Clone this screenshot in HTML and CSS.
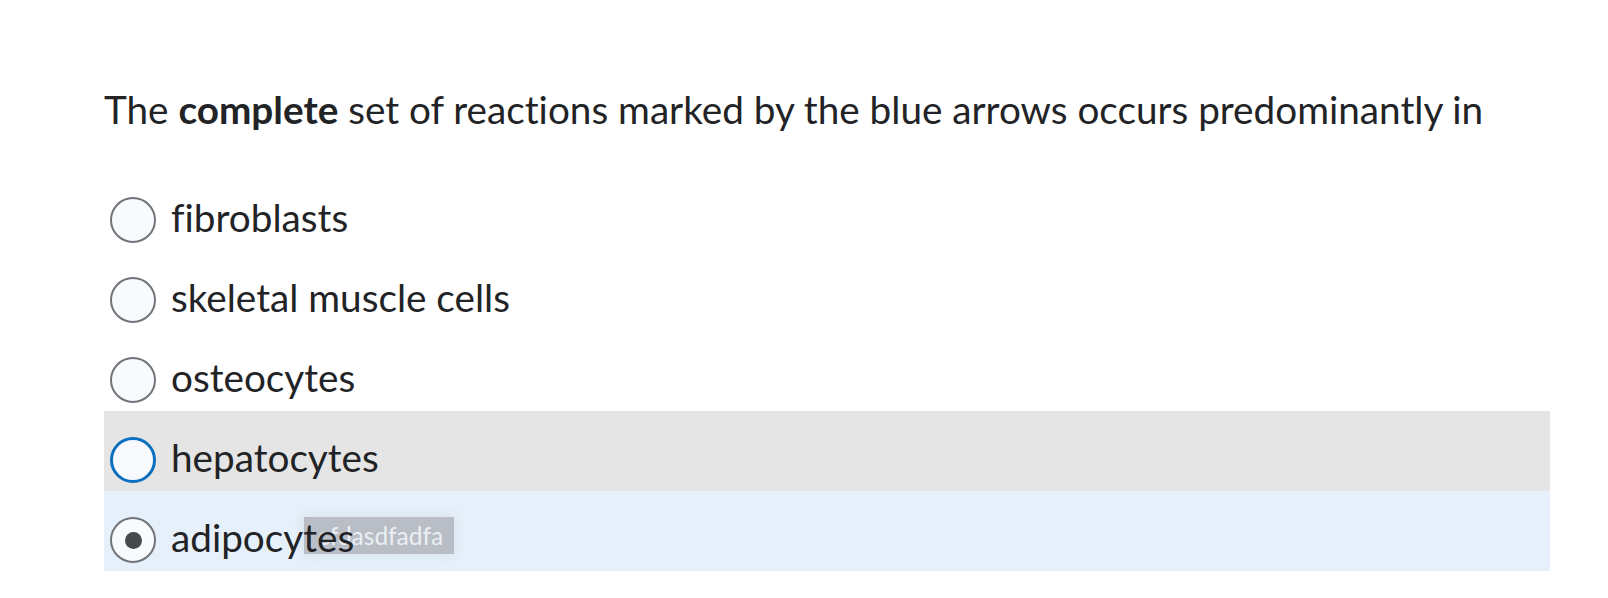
FILE: index.html
```html
<!DOCTYPE html>
<html>
<head>
<meta charset="utf-8">
<link rel="stylesheet" href="styles.css">
</head>
<body>
<div class="quiz">
  <p class="question">The <strong>complete</strong> set of reactions marked by the blue arrows occurs predominantly in</p>
  <div class="options">
    <div class="option">
      <span class="radio"></span>
      <span class="label">fibroblasts</span>
    </div>
    <div class="option">
      <span class="radio"></span>
      <span class="label">skeletal muscle cells</span>
    </div>
    <div class="option">
      <span class="radio"></span>
      <span class="label">osteocytes</span>
    </div>
    <div class="option option-hover">
      <span class="radio radio-focus"></span>
      <span class="label">hepatocytes</span>
    </div>
    <div class="option option-selected">
      <span class="radio radio-checked"></span>
      <span class="label">adipocytes<span class="drag-ghost">cfdasdfadfa</span></span>
    </div>
  </div>
</div>
</body>
</html>
```

FILE: styles.css
```css
* { box-sizing: border-box; }

body {
  margin: 0;
  background: #ffffff;
  font-family: Lato, "Open Sans", "Liberation Sans", sans-serif;
  color: #222326;
  font-variant-ligatures: none;
}

.quiz {
  margin-left: 104px;
  width: 1446px;
  padding-top: 88px;
}

.question {
  margin: 0;
  font-size: 38.7px;
  line-height: 43px;
  font-weight: 400;
}

.question strong {
  font-weight: 700;
}

.options {
  margin-top: 40px;
  display: flex;
  flex-direction: column;
}

.option {
  height: 80px;
  display: flex;
  align-items: flex-start;
  padding-left: 6px;
}

.option-hover {
  background: #e5e5e5;
}

.option-selected {
  background: #e6f0fa;
}

.radio {
  flex: none;
  width: 46px;
  height: 46px;
  margin-top: 26px;
  border-radius: 50%;
  border: 2px solid #6f7479;
  background: #f8fafe;
  display: flex;
  align-items: center;
  justify-content: center;
}

.radio-focus {
  border: 3px solid #0b6fbf;
}

.radio-checked::after {
  content: "";
  width: 17px;
  height: 17px;
  border-radius: 50%;
  background: #46484c;
}

.label {
  position: relative;
  margin-left: 15px;
  margin-top: 22px;
  font-size: 38.7px;
  line-height: 48px;
}

.option-selected .label {
  z-index: 0;
}

.drag-ghost {
  position: absolute;
  z-index: -1;
  left: 133px;
  top: 4px;
  width: 150px;
  height: 37px;
  padding-left: 14px;
  background: #b9bec6;
  color: #eceff3;
  font-size: 24.5px;
  line-height: 37px;
  box-shadow: 0 0 12px rgba(180, 188, 200, 0.35);
  white-space: nowrap;
  overflow: hidden;
}
```
